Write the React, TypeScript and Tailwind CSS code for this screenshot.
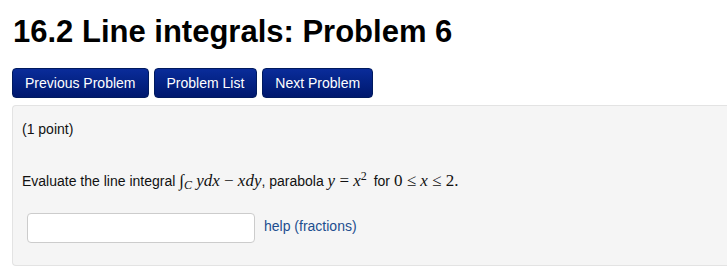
import * as React from 'react';

const navBtn =
  "h-[30px] px-[12px] rounded-[4px] border border-[#001a5e] bg-gradient-to-b from-[#0a2c9a] to-[#00186e] text-white text-[14px] leading-none";

export default function App() {
  return (
    <div className="min-h-[270px] bg-white font-['Liberation_Sans',Arial,sans-serif] text-[#111]">
      <div className="pl-[13px] pt-[14px]">
        <h1 className="text-[31px] font-bold leading-[36px] text-black">16.2 Line integrals: Problem 6</h1>
      </div>
      <div className="flex gap-[5px] pl-[12px] mt-[18px]">
        <button className={navBtn}>Previous Problem</button>
        <button className={navBtn}>Problem List</button>
        <button className={navBtn}>Next Problem</button>
      </div>
      <div className="ml-[12px] mt-[7px] h-[161px] rounded-l-[4px] border border-r-0 border-[#e3e3e3] bg-[#f5f5f5] pl-[9px] pt-[13px] text-[14px]">
        <p className="leading-[20px]">(1 point)</p>
        <p className="mt-[32px] leading-[20px]">
          Evaluate the line integral{' '}
          <span className="font-['Liberation_Serif',serif] text-[17px] leading-none">
            <span className="italic">∫</span>
            <sub className="italic text-[12px]">C</sub>{' '}
            <span className="italic">ydx</span> − <span className="italic">xdy</span>
          </span>
          , parabola{' '}
          <span className="font-['Liberation_Serif',serif] text-[17px] leading-none">
            <span className="italic">y</span> = <span className="italic">x</span>
            <sup className="text-[12px] mr-[3px]">2</sup>
          </span>{' '}
          for{' '}
          <span className="font-['Liberation_Serif',serif] text-[17px] leading-none">
            0 ≤ <span className="italic">x</span> ≤ 2.
          </span>
        </p>
        <div className="flex items-center mt-[22px] pl-[5px]">
          <input className="w-[228px] h-[30px] rounded-[4px] border border-[#cccccc] bg-white px-2 outline-none" />
          <a className="ml-[9px] text-[14px] text-[#1d4e8f] -mt-[3px]">help (fractions)</a>
        </div>
      </div>
    </div>
  );
}
